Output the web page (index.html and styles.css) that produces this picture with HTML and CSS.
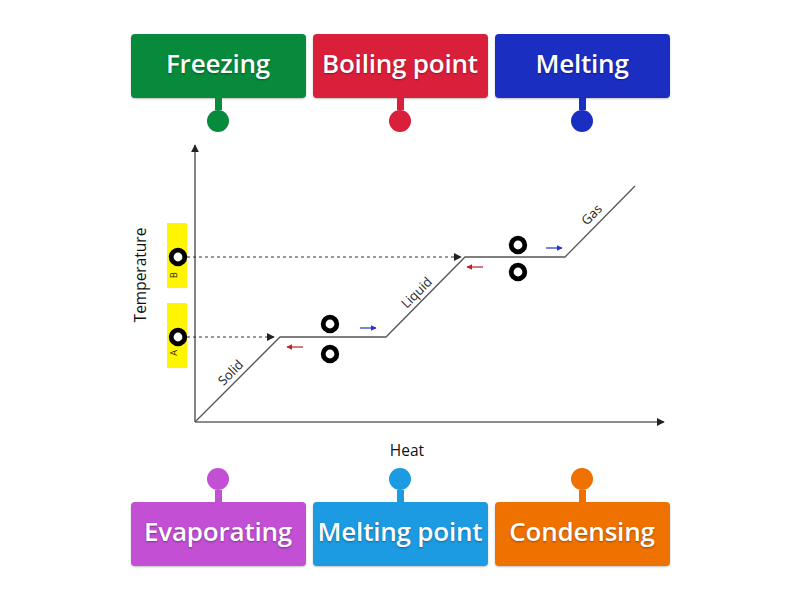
FILE: index.html
```html
<!DOCTYPE html>
<html>
<head>
<meta charset="utf-8">
<link rel="stylesheet" href="styles.css">
</head>
<body>
<div class="page">
  <div class="row top">
    <div class="item c-green"><div class="box">Freezing</div><div class="stem"></div><div class="dot"></div></div>
    <div class="item c-red"><div class="box">Boiling point</div><div class="stem"></div><div class="dot"></div></div>
    <div class="item c-blue"><div class="box">Melting</div><div class="stem"></div><div class="dot"></div></div>
  </div>
  <svg class="graph" width="800" height="336" viewBox="0 132 800 336" xmlns="http://www.w3.org/2000/svg">
    <defs>
      <marker id="ah" viewBox="0 0 10 10" refX="9" refY="5" markerWidth="8" markerHeight="8" markerUnits="userSpaceOnUse" orient="auto">
        <path d="M0,0 L10,5 L0,10 z" fill="#222"/>
      </marker>
      <marker id="ahb" viewBox="0 0 10 10" refX="9" refY="5" markerWidth="6" markerHeight="6" markerUnits="userSpaceOnUse" orient="auto">
        <path d="M0,0 L10,5 L0,10 z" fill="#2233cc"/>
      </marker>
      <marker id="ahr" viewBox="0 0 10 10" refX="9" refY="5" markerWidth="6" markerHeight="6" markerUnits="userSpaceOnUse" orient="auto">
        <path d="M0,0 L10,5 L0,10 z" fill="#c0202a"/>
      </marker>
    </defs>
    <!-- axes -->
    <line x1="195" y1="422" x2="195" y2="145" stroke="#666" stroke-width="1.6" marker-end="url(#ah)"/>
    <line x1="195" y1="422" x2="664" y2="422" stroke="#666" stroke-width="1.6" marker-end="url(#ah)"/>
    <!-- curve -->
    <polyline points="195,422 280,337 386,337 465,257 565,257 635,186" fill="none" stroke="#555" stroke-width="1.3"/>
    <!-- yellow tags -->
    <rect x="167" y="223" width="20" height="65" fill="#fff500"/>
    <rect x="167" y="303" width="20" height="65" fill="#fff500"/>
    <text class="tiny" x="181" y="279" transform="rotate(-90 177 279)" text-anchor="middle">B</text>
    <text class="tiny" x="181" y="357" transform="rotate(-90 177 357)" text-anchor="middle">A</text>
    <!-- dashed -->
    <line x1="187" y1="257" x2="461" y2="257" stroke="#333" stroke-width="1" stroke-dasharray="3 3" marker-end="url(#ah)"/>
    <line x1="187" y1="337" x2="274" y2="337" stroke="#333" stroke-width="1" stroke-dasharray="3 3" marker-end="url(#ah)"/>
    <!-- small arrows -->
    <line x1="360" y1="328" x2="376" y2="328" stroke="#2233cc" stroke-width="1.2" marker-end="url(#ahb)"/>
    <line x1="303" y1="347" x2="287" y2="347" stroke="#c0202a" stroke-width="1.2" marker-end="url(#ahr)"/>
    <line x1="546" y1="248" x2="562" y2="248" stroke="#2233cc" stroke-width="1.2" marker-end="url(#ahb)"/>
    <line x1="483" y1="267" x2="467" y2="267" stroke="#c0202a" stroke-width="1.2" marker-end="url(#ahr)"/>
    <!-- circles -->
    <g fill="#fff" stroke="#000" stroke-width="4.8">
      <circle cx="178" cy="257" r="6.8"/>
      <circle cx="178" cy="337" r="6.8"/>
      <circle cx="330" cy="324" r="6.8"/>
      <circle cx="330" cy="354" r="6.8"/>
      <circle cx="518" cy="245" r="6.8"/>
      <circle cx="518" cy="272" r="6.8"/>
    </g>
    <!-- labels -->
    <text class="axis" x="151" y="280" transform="rotate(-90 146 280)" text-anchor="middle">Temperature</text>
    <text class="axis" x="407" y="456" text-anchor="middle">Heat</text>
    <text class="phase" x="231" y="377" transform="rotate(-45 231 373)" text-anchor="middle">Solid</text>
    <text class="phase" x="417" y="297" transform="rotate(-45 417 293)" text-anchor="middle">Liquid</text>
    <text class="phase" x="592" y="219" transform="rotate(-45 592 215)" text-anchor="middle">Gas</text>
  </svg>
  <div class="row bottom">
    <div class="item c-purple"><div class="dot"></div><div class="stem"></div><div class="box">Evaporating</div></div>
    <div class="item c-cyan"><div class="dot"></div><div class="stem"></div><div class="box">Melting point</div></div>
    <div class="item c-orange"><div class="dot"></div><div class="stem"></div><div class="box">Condensing</div></div>
  </div>
</div>
</body>
</html>
```
FILE: styles.css
```css
html, body {
  margin: 0;
  padding: 0;
  background: #fff;
}
.page {
  width: 800px;
  height: 600px;
  padding-top: 34px;
  box-sizing: border-box;
  font-family: "Open Sans", "DejaVu Sans", sans-serif;
}
.row {
  display: flex;
  justify-content: center;
  gap: 7px;
}
.item {
  width: 175px;
  display: flex;
  flex-direction: column;
  align-items: center;
}
.box {
  width: 175px;
  height: 64px;
  box-sizing: border-box;
  padding-bottom: 6px;
  border-radius: 4px;
  color: #fff;
  font-size: 26px;
  font-weight: 600;
  letter-spacing: -0.2px;
  display: flex;
  align-items: center;
  justify-content: center;
  white-space: nowrap;
  text-shadow: 0 1px 2px rgba(0,0,0,0.35);
  box-shadow: 0 1px 2px rgba(0,0,0,0.25);
}
.stem {
  width: 7px;
  height: 12px;
}
.dot {
  width: 22px;
  height: 22px;
  border-radius: 50%;
}
.graph {
  display: block;
}
.c-green .box, .c-green .stem, .c-green .dot { background: #078a3c; }
.c-red .box, .c-red .stem, .c-red .dot { background: #da1f3b; }
.c-blue .box, .c-blue .stem, .c-blue .dot { background: #1b2ec2; }
.c-purple .box, .c-purple .stem, .c-purple .dot { background: #c24fd4; }
.c-cyan .box, .c-cyan .stem, .c-cyan .dot { background: #1c9be2; }
.c-orange .box, .c-orange .stem, .c-orange .dot { background: #ef7100; }
.axis {
  font-family: "Open Sans", "DejaVu Sans", sans-serif;
  font-size: 15.5px;
  fill: #111;
}
.phase {
  font-family: "Open Sans", "DejaVu Sans", sans-serif;
  font-size: 13px;
  fill: #222;
}
.tiny {
  font-family: "Open Sans", "DejaVu Sans", sans-serif;
  font-size: 9px;
  fill: #222;
}
```
